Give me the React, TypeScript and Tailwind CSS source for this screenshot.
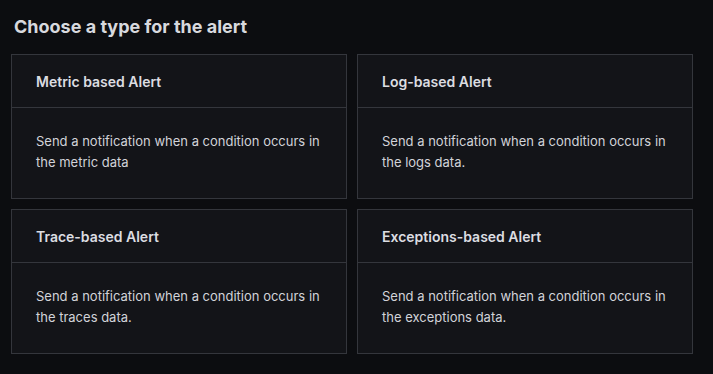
import React from "react";

const cards = [
  { title: "Metric based Alert", desc: "Send a notification when a condition occurs in the metric data" },
  { title: "Log-based Alert", desc: "Send a notification when a condition occurs in the logs data." },
  { title: "Trace-based Alert", desc: "Send a notification when a condition occurs in the traces data." },
  { title: "Exceptions-based Alert", desc: "Send a notification when a condition occurs in the exceptions data." },
];

export default function App() {
  return (
    <div
      className="w-[713px] h-[374px] bg-[#0c0d10] text-[#d8d9dd] pl-[11px] pt-[14px]"
      style={{ fontFamily: "Inter, 'Noto Sans', sans-serif" }}
    >
      <h1 className="pl-[3px] text-[18px] leading-[26px] font-bold text-[#d8d9de] mb-[14px]">
        Choose a type for the alert
      </h1>
      <div className="grid grid-cols-[336px_336px] gap-[10px]">
        {cards.map((c) => (
          <div key={c.title} className="h-[145px] border border-[#34363c] bg-[#131418] flex flex-col">
            <div className="h-[53px] border-b border-[#34363c] px-[24px] flex items-center">
              <span className="text-[14px] font-semibold text-[#dcdde1]">{c.title}</span>
            </div>
            <div className="px-[24px] pt-[23px] pr-[16px]">
              <p className="text-[13px] leading-[21px] text-[#d2d3d8]">{c.desc}</p>
            </div>
          </div>
        ))}
      </div>
    </div>
  );
}
